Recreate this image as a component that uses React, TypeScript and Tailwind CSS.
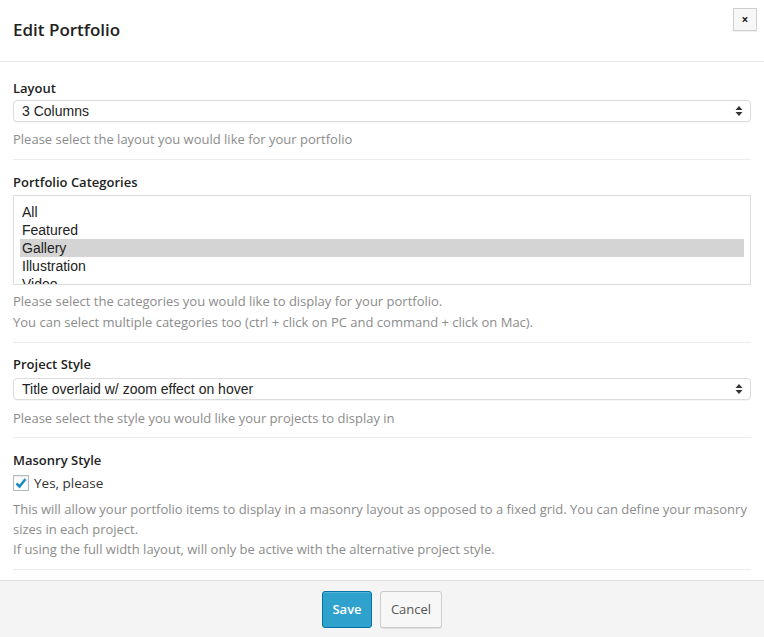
import React from 'react';

const SelectBox = ({ value }: { value: string }) => (
  <div className="flex items-center justify-between h-[22px] border border-[#dcdcdc] rounded-[4px] bg-white pl-[8px] pr-[7px] font-['Liberation_Sans',Arial,sans-serif] text-[14px] text-[#222] shadow-[0_1px_1px_rgba(0,0,0,0.04)]">
    <span>{value}</span>
    <svg width="8" height="12" viewBox="0 0 8 12">
      <path d="M4 1 L7.5 5 H0.5 Z" fill="#333" />
      <path d="M4 11 L7.5 7 H0.5 Z" fill="#333" />
    </svg>
  </div>
);

const Help = ({ children }: { children: React.ReactNode }) => (
  <div className="text-[13px] leading-[21px] text-[#8c8c8c]">{children}</div>
);

const Label = ({ children }: { children: React.ReactNode }) => (
  <div className="text-[13px] leading-[20px] font-semibold text-[#222]">{children}</div>
);

export default function App() {
  const categories = ['All', 'Featured', 'Gallery', 'Illustration', 'Video'];

  return (
    <div className="w-[764px] h-[637px] bg-white flex flex-col font-['Open_Sans',sans-serif] overflow-hidden">
      {/* header */}
      <div className="relative h-[62px] border-b border-[#e8e8e8] flex items-center pl-[13px]">
        <h1 className="text-[17px] font-semibold text-[#222] mt-[-2px]">Edit Portfolio</h1>
        <button className="absolute right-[7px] top-[8px] w-[24px] h-[23px] flex items-center justify-center border border-[#cfcfcf] bg-[#f7f7f7] text-[12px] leading-none font-bold text-[#222] shadow-[0_1px_0_rgba(0,0,0,0.06)]">
          ×
        </button>
      </div>

      <div className="flex-1 px-[13px]">
        {/* layout */}
        <div className="pt-[16px] pb-[9px] border-b border-[#ececec]">
          <Label>Layout</Label>
          <div className="mt-[2px]">
            <SelectBox value="3 Columns" />
          </div>
          <div className="mt-[7px]">
            <Help>Please select the layout you would like for your portfolio</Help>
          </div>
        </div>

        {/* categories */}
        <div className="pt-[12px] pb-[9px] border-b border-[#ececec]">
          <Label>Portfolio Categories</Label>
          <div className="mt-[3px] h-[90px] overflow-hidden border border-[#dcdcdc] bg-white pt-[7px] px-[6px] font-['Liberation_Sans',Arial,sans-serif] text-[14px] text-[#222]">
            {categories.map((c) => (
              <div
                key={c}
                className={c === 'Gallery' ? 'h-[18px] leading-[18px] pl-[2px] bg-[#d4d4d4]' : 'h-[18px] leading-[18px] pl-[2px]'}
              >
                {c}
              </div>
            ))}
          </div>
          <div className="mt-[6px]">
            <Help>
              Please select the categories you would like to display for your portfolio.
              <br />
              You can select multiple categories too (ctrl + click on PC and command + click on Mac).
            </Help>
          </div>
        </div>

        {/* project style */}
        <div className="pt-[11px] pb-[8px] border-b border-[#ececec]">
          <Label>Project Style</Label>
          <div className="mt-[4px]">
            <SelectBox value="Title overlaid w/ zoom effect on hover" />
          </div>
          <div className="mt-[8px]">
            <Help>Please select the style you would like your projects to display in</Help>
          </div>
        </div>

        {/* masonry */}
        <div className="pt-[12px] pb-[10px] border-b border-[#ececec]">
          <Label>Masonry Style</Label>
          <div className="flex items-center gap-[5px] mt-[3px] h-[20px]">
            <div className="w-[16px] h-[16px] border border-[#b4b9be] bg-white flex items-center justify-center shadow-[inset_0_1px_2px_rgba(0,0,0,0.1)]">
              <svg width="12" height="12" viewBox="0 0 12 12">
                <path d="M1.5 6.5 L4.5 9.5 L10.5 2" stroke="#1e8cbe" strokeWidth="2.6" fill="none" />
              </svg>
            </div>
            <span className="text-[13.5px] text-[#333]">Yes, please</span>
          </div>
          <div className="mt-[6px] text-[13px] leading-[20px] text-[#8c8c8c]">
            This will allow your portfolio items to display in a masonry layout as opposed to a fixed grid. You can define your masonry sizes in each project.
            <br />
            If using the full width layout, will only be active with the alternative project style.
          </div>
        </div>
      </div>

      {/* footer */}
      <div className="h-[57px] border-t border-[#dedede] bg-[#f4f4f4] flex items-center justify-center gap-[8px] pt-[1px]">
        <button className="w-[50px] h-[37px] rounded-[3px] bg-[#2ea2cc] border border-[#0074a2] text-white text-[13px] font-semibold shadow-[inset_0_1px_0_rgba(120,200,230,0.5)]">
          Save
        </button>
        <button className="w-[62px] h-[37px] rounded-[3px] bg-[#f7f7f7] border border-[#cccccc] text-[#555] text-[13px] shadow-[0_1px_0_rgba(0,0,0,0.08)]">
          Cancel
        </button>
      </div>
    </div>
  );
}
